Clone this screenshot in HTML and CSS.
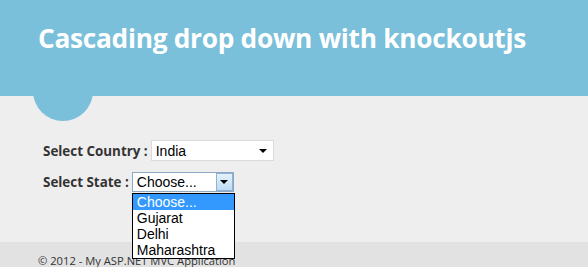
FILE: index.html
```html
<!DOCTYPE html>
<html lang="en">
<head>
  <meta charset="UTF-8" />
  <title>Cascading drop down with knockoutjs</title>
  <link rel="stylesheet" href="styles.css">
</head>
<body>
  <header class="cabecera">
    <h1>Cascading drop down with knockoutjs</h1>
  </header>

  <main class="contenido">
    <div class="fila">
      <label class="etiqueta">Select Country :</label>
      <div class="combo combo-pais">
        <span class="valor">India</span>
        <span class="flecha"></span>
      </div>
    </div>

    <div class="fila fila-estado">
      <label class="etiqueta">Select State :</label>
      <div class="combo combo-estado">
        <span class="valor">Choose...</span>
        <span class="boton"><span class="flecha"></span></span>
        <ul class="lista">
          <li class="activo">Choose...</li>
          <li>Gujarat</li>
          <li>Delhi</li>
          <li>Maharashtra</li>
        </ul>
      </div>
    </div>
  </main>

  <footer class="pie">
    <p>&copy; 2012 - My ASP.NET MVC Application</p>
  </footer>
</body>
</html>
```

FILE: styles.css
```css
:root {
  --azul: #7ac0da;
  --fondo: #efeeef;
  --pie: #e2e2e2;
  --texto: #333;
}

* {
  box-sizing: border-box;
  margin: 0;
  padding: 0;
}

html, body {
  overflow: hidden;
}

body {
  font-family: "Open Sans", "Noto Sans", sans-serif;
  background-color: var(--fondo);
  color: var(--texto);
  height: 267px;
}

.cabecera {
  position: relative;
  height: 96px;
  background-color: var(--azul);
  padding: 20px 0 0 38px;
}

/* la bola decorativa bajo la cabecera */
.cabecera::after {
  content: "";
  position: absolute;
  left: 33px;
  top: 61px;
  width: 60px;
  height: 60px;
  border-radius: 50%;
  background-color: var(--azul);
}

h1 {
  color: white;
  font-size: 26.3px;
  font-weight: bold;
  letter-spacing: -0.3px;
}

.contenido {
  height: 146px;
  padding: 44px 0 0 43px;
}

.fila {
  display: flex;
  align-items: center;
}

.fila-estado {
  margin-top: 11px;
}

.etiqueta {
  font-size: 13.4px;
  font-weight: bold;
  margin-right: 3px;
}

.combo {
  position: relative;
  display: flex;
  align-items: center;
  background-color: white;
  font-family: "Liberation Sans", Arial, sans-serif;
  font-size: 14px;
  color: black;
}

.combo-pais {
  width: 123px;
  height: 21px;
  border: 1px solid #dadada;
  padding-left: 4px;
  justify-content: space-between;
}

.combo-pais .flecha {
  margin-right: 6px;
}

.flecha {
  width: 0;
  height: 0;
  border-left: 4px solid transparent;
  border-right: 4px solid transparent;
  border-top: 4px solid black;
}

.combo-estado {
  width: 102px;
  height: 20px;
  border: 1px solid #8ea8c4;
  padding-left: 4px;
  justify-content: space-between;
}

.boton {
  display: flex;
  align-items: center;
  justify-content: center;
  width: 17px;
  height: 18px;
  border: 1px solid #8db2d6;
  background: linear-gradient(#e4f2fb, #bcdcf3);
}

.lista {
  position: absolute;
  top: 20px;
  left: -1px;
  width: 103px;
  list-style: none;
  background-color: white;
  border: 1px solid black;
}

.lista li {
  height: 16px;
  line-height: 16px;
  padding-left: 4px;
}

.lista li.activo {
  background-color: #3399ff;
  color: white;
}

.pie {
  height: 25px;
  background-color: var(--pie);
  padding: 11px 0 0 38px;
  font-size: 11.2px;
}
```
